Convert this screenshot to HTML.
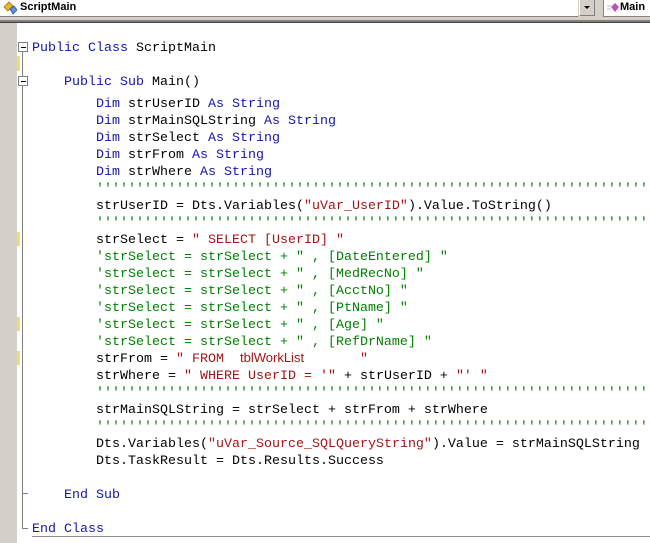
<!DOCTYPE html>
<html><head><style>
body{margin:0;width:650px;height:543px;overflow:hidden;background:#fff;position:relative;font-family:"Liberation Mono","Courier New",monospace;}
.tb{position:absolute;left:0;top:0;width:650px;height:22px;background:#d4d0c8;}
.c1{position:absolute;left:0;top:0;width:578px;height:16px;background:#fff;border-bottom:1px solid #808080;}
.btn{position:absolute;left:579px;top:0;width:16px;height:16px;background:#d4d0c8;border-right:1px solid #808080;border-bottom:1px solid #808080;border-left:1px solid #fff;box-sizing:border-box;}
.c2{position:absolute;left:603px;top:0;width:47px;height:16px;background:#fff;border-left:1px solid #808080;border-bottom:1px solid #808080;}
.lbl{position:absolute;top:1px;font:bold 11px "Liberation Sans",sans-serif;color:#000;}
.sep{position:absolute;left:0;top:20px;width:650px;height:2px;background:#808080;border-bottom:1px solid #404040;}
.gut{position:absolute;left:0;top:23px;width:17px;height:520px;background:#d4d0c8;}
.yel{position:absolute;left:17px;width:3px;background:#e8e070;}
.vl{position:absolute;left:22px;width:1px;background:#808080;}
.box{position:absolute;left:18px;width:8px;height:8px;border:1px solid #808080;background:#fff;}
.box:after{content:"";position:absolute;left:2px;top:4px;width:5px;height:1px;background:#000;}
.l{position:absolute;white-space:pre;font-size:13.33px;line-height:17px;height:17px;color:#000;}
.k{color:#1515b0}.g{color:#008000}.s{color:#a31515}
.d{color:#008000;overflow:hidden;width:560px;}
.sf{position:absolute;left:144px;top:-2px;font-family:"Liberation Sans",sans-serif;font-size:13px;line-height:17px;color:#a31515;}
</style></head><body>
<div class="tb">
<div class="c1"></div>
<div class="lbl" style="left:20px">ScriptMain</div>
<svg style="position:absolute;left:2px;top:1px" width="16" height="14"><path d="M2 6 L7 1 L11 5 L6 10Z" fill="#e8b820" stroke="#a07010" stroke-width="0.8"/><path d="M8 8 L12 5 L15 9 L11 13Z" fill="#6090e0" stroke="#305090" stroke-width="0.8"/></svg>
<div class="btn"><svg width="14" height="14"><path d="M4 6 L10 6 L7 9Z" fill="#000"/></svg></div>
<div class="c2"></div>
<svg style="position:absolute;left:606px;top:2px" width="14" height="12"><path d="M1 4h4M1 7h4" stroke="#bbb"/><path d="M9 1 L13 5 L9 10 L5 5Z" fill="#c050c0"/></svg>
<div class="lbl" style="left:620px">Main</div>
<div class="sep"></div>
</div>
<div class="gut"></div>
<div class="yel" style="top:56px;height:15px"></div>
<div class="yel" style="top:232px;height:14px"></div>
<div class="yel" style="top:317px;height:14px"></div>
<div class="yel" style="top:351px;height:14px"></div>
<div class="vl" style="top:51px;height:478px"></div>
<div class="vl" style="left:22px;top:528px;height:1px;width:6px"></div>
<div class="vl" style="left:22px;top:493px;height:1px;width:6px"></div>
<div class="box" style="top:42px"></div>
<div class="box" style="top:76px"></div>
<div style="position:absolute;left:32px;top:536px;width:618px;height:1px;background:#909090"></div>

<div class="l" style="left:32px;top:40px"><span class="k">Public Class</span> ScriptMain</div>
<div class="l" style="left:64px;top:74px"><span class="k">Public Sub</span> Main()</div>
<div class="l" style="left:96px;top:96px"><span class="k">Dim</span> strUserID <span class="k">As String</span></div>
<div class="l" style="left:96px;top:113px"><span class="k">Dim</span> strMainSQLString <span class="k">As String</span></div>
<div class="l" style="left:96px;top:130px"><span class="k">Dim</span> strSelect <span class="k">As String</span></div>
<div class="l" style="left:96px;top:147px"><span class="k">Dim</span> strFrom <span class="k">As String</span></div>
<div class="l" style="left:96px;top:164px"><span class="k">Dim</span> strWhere <span class="k">As String</span></div>
<div class="l d" style="left:96px;top:181px">''''''''''''''''''''''''''''''''''''''''''''''''''''''''''''''''''''''''''''''</div>
<div class="l" style="left:96px;top:198px">strUserID = Dts.Variables(<span class="s">"uVar_UserID"</span>).Value.ToString()</div>
<div class="l d" style="left:96px;top:215px">''''''''''''''''''''''''''''''''''''''''''''''''''''''''''''''''''''''''''''''</div>
<div class="l" style="left:96px;top:232px">strSelect = <span class="s">" SELECT [UserID] "</span></div>
<div class="l g" style="left:96px;top:249px">'strSelect = strSelect + " , [DateEntered] "</div>
<div class="l g" style="left:96px;top:266px">'strSelect = strSelect + " , [MedRecNo] "</div>
<div class="l g" style="left:96px;top:283px">'strSelect = strSelect + " , [AcctNo] "</div>
<div class="l g" style="left:96px;top:300px">'strSelect = strSelect + " , [PtName] "</div>
<div class="l g" style="left:96px;top:317px">'strSelect = strSelect + " , [Age] "</div>
<div class="l g" style="left:96px;top:334px">'strSelect = strSelect + " , [RefDrName] "</div>
<div class="l" style="left:96px;top:351px">strFrom = <span class="s">" FROM                 "</span><span class="sf">tblWorkList</span></div>
<div class="l" style="left:96px;top:368px">strWhere = <span class="s">" WHERE UserID = '"</span> + strUserID + <span class="s">"' "</span></div>
<div class="l d" style="left:96px;top:385px">''''''''''''''''''''''''''''''''''''''''''''''''''''''''''''''''''''''''''''''</div>
<div class="l" style="left:96px;top:402px">strMainSQLString = strSelect + strFrom + strWhere</div>
<div class="l d" style="left:96px;top:419px">''''''''''''''''''''''''''''''''''''''''''''''''''''''''''''''''''''''''''''''</div>
<div class="l" style="left:96px;top:436px">Dts.Variables(<span class="s">"uVar_Source_SQLQueryString"</span>).Value = strMainSQLString</div>
<div class="l" style="left:96px;top:453px">Dts.TaskResult = Dts.Results.Success</div>
<div class="l" style="left:64px;top:487px"><span class="k">End Sub</span></div>
<div class="l" style="left:32px;top:521px"><span class="k">End Class</span></div>
</body></html>
